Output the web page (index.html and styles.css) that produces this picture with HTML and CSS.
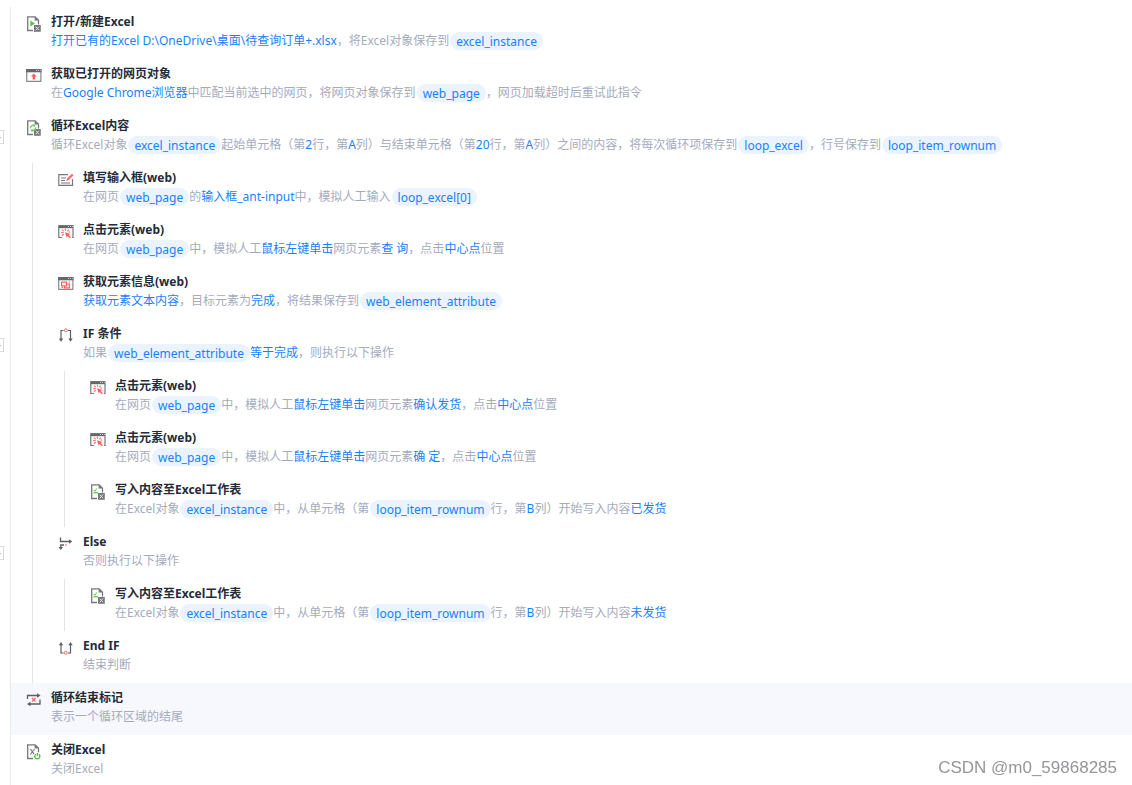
FILE: index.html
```
<!DOCTYPE html>
<html lang="zh-CN">
<head>
    <meta charset="UTF-8">
    <title>流程编辑</title>
    <link rel="stylesheet" href="styles.css">
</head>
<body>
    <!-- icon shapes shared by the steps -->
    <svg class="sprite" aria-hidden="true">
        <symbol id="doc" viewBox="0 0 16 16">
            <path d="M7 14.5H1.7V.8h7.5l3.3 3.4v4.3" fill="none" stroke="#77777f" stroke-width="1.3"/>
            <path d="M8.6.4v4.2h4.3z" fill="#77777f"/>
        </symbol>
        <symbol id="sheet" viewBox="0 0 16 16">
            <use href="#doc"/>
            <path d="M8 9h6.8v6.8H8z" fill="#77777f"/>
            <path d="M9.8 10.6l3.2 3.6m0-3.6l-3.2 3.6" stroke="#e4e4e8" stroke-width="1"/>
        </symbol>
        <symbol id="window" viewBox="0 0 16 16">
            <path d="M.7 1.7h14.2v11.6H.7z" fill="#fff" stroke="#88888f" stroke-width="1.2"/>
            <path d="M.1 1.1h15.4v3.2H.1z" fill="#66666e"/>
            <path d="M10 2.5h1m1 0h1m1 0h.8" stroke="#d0d0d4" stroke-width="1"/>
        </symbol>
        <symbol id="icon-open" viewBox="0 0 16 16">
            <use href="#sheet"/>
            <path d="M4.3 4.6v6l4.6-3z" fill="#56c33c"/>
        </symbol>
        <symbol id="icon-page" viewBox="0 0 16 16">
            <use href="#window"/>
            <path d="M7.8 5.4l3 3.1H9v3H6.6v-3H4.8z" fill="#ff5f62"/>
        </symbol>
        <symbol id="icon-loop" viewBox="0 0 16 16">
            <use href="#sheet"/>
            <path d="M4.4 8.2a2.6 2.6 0 0 1 4.5-2m.6 1.3a2.6 2.6 0 0 1-4.3 2.3" fill="none" stroke="#6fcb58" stroke-width="1.3"/>
            <path d="M6.4 4.3l3.2.2-1.6 2.6zM7.6 11.7l-3.2-.4 1.8-2.3z" fill="#6fcb58"/>
        </symbol>
        <symbol id="icon-input" viewBox="0 0 16 16">
            <path d="M10 2.7H.8v10.6h13.7V7" fill="none" stroke="#77777f" stroke-width="1.2"/>
            <path d="M3 6h5M3 8.5h4M3 11h9" stroke="#77777f" stroke-width="1"/>
            <path d="M8.3 9l.6-2.3 5-5 1.6 1.6-5 5z" fill="#ff6668"/>
        </symbol>
        <symbol id="icon-click" viewBox="0 0 16 16">
            <path d="M4 13.5H.8V4M15 4v9.5h-1" fill="none" stroke="#77777f" stroke-width="1.2"/>
            <path d="M.2 1.1h15.3v3.1H.2z" fill="#66666e"/>
            <path d="M10 2.5h1m1 0h1m1 0h.8" stroke="#d0d0d4" stroke-width="1"/>
            <path d="M7 8.2l5.4 1.7-1.8 1 2.3 2.3-1 1-2.3-2.3-.9 1.7z" fill="#ff5f62"/>
            <path d="M3.2 8.6h2.4M3.9 5.6l1.8 1.5M7.4 4.8v2M11 5.6L9.2 7.1M3.8 11.8l2-1.6M10.3 8h1.900" stroke="#ff6c6e" stroke-width="1.1"/>
        </symbol>
        <symbol id="icon-element" viewBox="0 0 16 16">
            <use href="#window"/>
            <path d="M3.6 6.2h5v3.6h-5zM8.5 8h3v3.8h-5V10" fill="none" stroke="#ff5f62" stroke-width="1.2"/>
            <path d="M10.5 6h1.5M3.5 11.5H5" stroke="#ff5f62" stroke-width="1"/>
        </symbol>
        <symbol id="icon-if" viewBox="0 0 16 16">
            <path d="M5.5 2.5H3v9M10 2.5h2.5v9" fill="none" stroke="#5c5c64" stroke-width="1.2"/>
            <path d="M.8 10.5h4.4L3 13.8zM10.3 10.5h4.4l-2.2 3.3z" fill="#5c5c64"/>
            <circle cx="7.800" cy="2.3" r="1.5" fill="#fff" stroke="#ff6668"/>
        </symbol>
        <symbol id="icon-write" viewBox="0 0 16 16">
            <use href="#sheet"/>
            <path d="M3.5 6l1.3 1.3 2-3" fill="none" stroke="#56c33c"/>
            <path d="M3.5 8.700h4.500" stroke="#56c33c" stroke-width="1.2"/>
        </symbol>
        <symbol id="icon-else" viewBox="0 0 16 16">
            <path d="M2.5 1.5v4H12M6 9H2.8v4" fill="none" stroke="#5c5c64" stroke-width="1.300"/>
            <path d="M11 3.2v4.6l3.300-2.300zM.6 11H5l-2.200 3z" fill="#5c5c64"/>
            <path d="M7 9h2" stroke="#ff6668" stroke-width="1.2"/>
        </symbol>
        <symbol id="icon-endif" viewBox="0 0 16 16">
            <path d="M3 4v9h2.600M12.500 4v9H10" fill="none" stroke="#5c5c64" stroke-width="1.2"/>
            <path d="M.8 5.200h4.400L3 2zM10.300 5.200h4.400L12.500 2z" fill="#5c5c64"/>
            <circle cx="7.800" cy="12.800" r="1.5" fill="#fff" stroke="#ff6668"/>
        </symbol>
        <symbol id="icon-loop-end" viewBox="0 0 16 16">
            <path d="M1.500 7V3.500H12M14 7.500V12H3.500" fill="none" stroke="#5c5c64" stroke-width="1.300"/>
            <path d="M11 1.300v4.400l3.500-2.200zM4.500 9.800v4.400L1 12z" fill="#5c5c64"/>
            <path d="M6 6l3.500 3.600m0-3.600L6 9.600" stroke="#ff5f62" stroke-width="1.2"/>
        </symbol>
        <symbol id="icon-close" viewBox="0 0 16 16">
            <use href="#doc"/>
            <path d="M4.300 5l4.200 5.500m0-5.500L4.300 10.500" stroke="#77777f" stroke-width="1.2"/>
            <circle cx="11.300" cy="12.300" r="3.700" fill="#fff"/>
            <path d="M9.800 10.200a2.600 2.600 0 1 0 3 0M11.300 9v3" fill="none" stroke="#56b948" stroke-width="1.300"/>
        </symbol>
    </svg>

    <div class="flow">
        <div class="gutter">
            <button class="toggle toggle-loop" aria-label="折叠循环"></button>
            <button class="toggle toggle-if" aria-label="折叠条件"></button>
            <button class="toggle toggle-else" aria-label="折叠否则"></button>
        </div>

        <ol class="steps">
            <li>
                <div class="step">
                    <svg class="icon"><use href="#icon-open"/></svg>
                    <div class="text">
                        <h2>打开/新建Excel</h2>
                        <p><span class="param">打开已有的Excel D:\OneDrive\桌面\待查询订单+.xlsx</span>，将Excel对象保存到<span class="chip">excel_instance</span></p>
                    </div>
                </div>
            </li>
            <li>
                <div class="step">
                    <svg class="icon"><use href="#icon-page"/></svg>
                    <div class="text">
                        <h2>获取已打开的网页对象</h2>
                        <p>在<span class="param">Google Chrome浏览器</span>中匹配当前选中的网页，将网页对象保存到<span class="chip">web_page</span>，网页加载超时后重试此指令</p>
                    </div>
                </div>
            </li>
            <li>
                <div class="step">
                    <svg class="icon"><use href="#icon-loop"/></svg>
                    <div class="text">
                        <h2>循环Excel内容</h2>
                        <p>循环Excel对象<span class="chip">excel_instance</span>起始单元格（第<span class="param">2</span>行，第<span class="param">A</span>列）与结束单元格（第<span class="param">20</span>行，第<span class="param">A</span>列）之间的内容，将每次循环项保存到<span class="chip">loop_excel</span>，行号保存到<span class="chip">loop_item_rownum</span></p>
                    </div>
                </div>
                <ol class="children">
                    <li>
                        <div class="step">
                            <svg class="icon"><use href="#icon-input"/></svg>
                            <div class="text">
                                <h2>填写输入框(web)</h2>
                                <p>在网页<span class="chip">web_page</span>的<span class="param">输入框_ant-input</span>中，模拟人工输入<span class="chip">loop_excel[0]</span></p>
                            </div>
                        </div>
                    </li>
                    <li>
                        <div class="step">
                            <svg class="icon"><use href="#icon-click"/></svg>
                            <div class="text">
                                <h2>点击元素(web)</h2>
                                <p>在网页<span class="chip">web_page</span>中，模拟人工<span class="param">鼠标左键单击</span>网页元素<span class="param">查 询</span>，点击<span class="param">中心点</span>位置</p>
                            </div>
                        </div>
                    </li>
                    <li>
                        <div class="step">
                            <svg class="icon"><use href="#icon-element"/></svg>
                            <div class="text">
                                <h2>获取元素信息(web)</h2>
                                <p><span class="param">获取元素文本内容</span>，目标元素为<span class="param">完成</span>，将结果保存到<span class="chip">web_element_attribute</span></p>
                            </div>
                        </div>
                    </li>
                    <li>
                        <div class="step">
                            <svg class="icon"><use href="#icon-if"/></svg>
                            <div class="text">
                                <h2>IF 条件</h2>
                                <p>如果<span class="chip">web_element_attribute</span><span class="param">等于完成</span>，则执行以下操作</p>
                            </div>
                        </div>
                        <ol class="children">
                            <li>
                                <div class="step">
                                    <svg class="icon"><use href="#icon-click"/></svg>
                                    <div class="text">
                                        <h2>点击元素(web)</h2>
                                        <p>在网页<span class="chip">web_page</span>中，模拟人工<span class="param">鼠标左键单击</span>网页元素<span class="param">确认发货</span>，点击<span class="param">中心点</span>位置</p>
                                    </div>
                                </div>
                            </li>
                            <li>
                                <div class="step">
                                    <svg class="icon"><use href="#icon-click"/></svg>
                                    <div class="text">
                                        <h2>点击元素(web)</h2>
                                        <p>在网页<span class="chip">web_page</span>中，模拟人工<span class="param">鼠标左键单击</span>网页元素<span class="param">确 定</span>，点击<span class="param">中心点</span>位置</p>
                                    </div>
                                </div>
                            </li>
                            <li>
                                <div class="step">
                                    <svg class="icon"><use href="#icon-write"/></svg>
                                    <div class="text">
                                        <h2>写入内容至Excel工作表</h2>
                                        <p>在Excel对象<span class="chip">excel_instance</span>中，从单元格（第<span class="chip">loop_item_rownum</span>行，第<span class="param">B</span>列）开始写入内容<span class="param">已发货</span></p>
                                    </div>
                                </div>
                            </li>
                        </ol>
                    </li>
                    <li>
                        <div class="step">
                            <svg class="icon"><use href="#icon-else"/></svg>
                            <div class="text">
                                <h2>Else</h2>
                                <p>否则执行以下操作</p>
                            </div>
                        </div>
                        <ol class="children">
                            <li>
                                <div class="step">
                                    <svg class="icon"><use href="#icon-write"/></svg>
                                    <div class="text">
                                        <h2>写入内容至Excel工作表</h2>
                                        <p>在Excel对象<span class="chip">excel_instance</span>中，从单元格（第<span class="chip">loop_item_rownum</span>行，第<span class="param">B</span>列）开始写入内容<span class="param">未发货</span></p>
                                    </div>
                                </div>
                            </li>
                        </ol>
                    </li>
                    <li>
                        <div class="step">
                            <svg class="icon"><use href="#icon-endif"/></svg>
                            <div class="text">
                                <h2>End IF</h2>
                                <p>结束判断</p>
                            </div>
                        </div>
                    </li>
                </ol>
            </li>
            <li>
                <div class="step active">
                    <svg class="icon"><use href="#icon-loop-end"/></svg>
                    <div class="text">
                        <h2>循环结束标记</h2>
                        <p>表示一个循环区域的结尾</p>
                    </div>
                </div>
            </li>
            <li>
                <div class="step last">
                    <svg class="icon"><use href="#icon-close"/></svg>
                    <div class="text">
                        <h2>关闭Excel</h2>
                        <p>关闭Excel</p>
                    </div>
                </div>
            </li>
        </ol>
    </div>

    <div class="watermark">CSDN @m0_59868285</div>
</body>
</html>
```
FILE: styles.css
```
* {
    margin: 0;
    padding: 0;
    box-sizing: border-box;
}

body {
    padding-top: 7px;
    background: #fff;
    color: #a5abbd;
    font-family: "Noto Sans", "Noto Sans CJK SC", sans-serif;
    font-size: 12px;
}

ol {
    list-style: none;
}

.sprite {
    display: none;
}

.flow {
    display: flex;
    min-height: calc(100vh - 7px);
}

/* fold buttons, one grid row per step */
.gutter {
    display: grid;
    flex: none;
    grid-auto-rows: 52px;
    align-items: center;
    width: 11px;
    border-right: 1px solid #e9e9ec;
}

.toggle {
    width: 4px;
    height: 14px;
    border: 1px solid #dcdce0;
    border-left: none;
    background: #fff;
}

.toggle::before {
    content: "";
    display: block;
    width: 1px;
    height: 1px;
    background: #b4b4ba;
}

.toggle-loop {
    grid-row: 3;
}

.toggle-if {
    grid-row: 7;
}

.toggle-else {
    grid-row: 11;
}

.steps {
    flex: 1;
    min-width: 0;
}

.children {
    margin-left: 21px;
    padding-left: 10px;
    border-left: 1px solid #e4e4e8;
}

.step {
    display: flex;
    gap: 9px;
    height: 52px;
    padding: 6px 0 0 15px;
}

.step.active {
    background: #f7f8fd;
}

.step.last {
    height: 50px;
}

.icon {
    flex: none;
    width: 16px;
    height: 16px;
    margin-top: 3px;
}

.text {
    white-space: nowrap;
}

h2 {
    color: #242b3a;
    font-size: 12px;
    font-weight: bold;
    line-height: 18px;
}

p {
    display: flex;
    align-items: center;
    height: 20px;
    line-height: 20px;
    white-space: pre;
}

.param {
    color: #1a7fff;
}

.chip {
    height: 18px;
    margin-left: 1px;
    padding: 0 6px;
    border-radius: 9px;
    background: #eaf3ff;
    color: #1a7fff;
    line-height: 20px;
}

.watermark {
    position: fixed;
    right: 15px;
    bottom: 5px;
    color: #96969a;
    font-family: "Liberation Sans", sans-serif;
    font-size: 17px;
    line-height: 24px;
    text-shadow: 1px 1px 0 #fff;
}
```
